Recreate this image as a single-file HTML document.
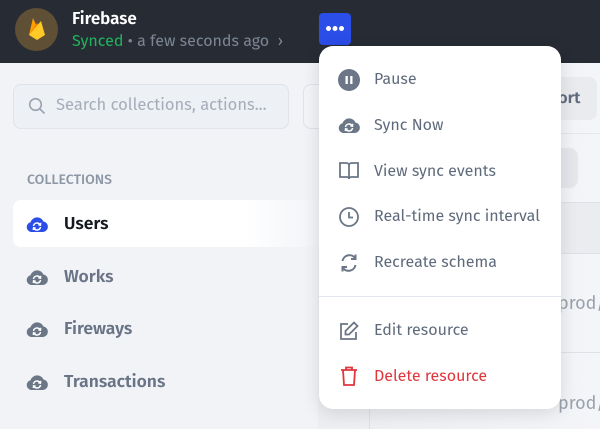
<!DOCTYPE html>
<html><head><meta charset="utf-8"><style>
*{margin:0;padding:0;box-sizing:border-box}
body{width:600px;height:429px;overflow:hidden;position:relative;background:#f1f3f7;font-family:"Fira Sans","Liberation Sans",sans-serif}
.abs{position:absolute}
.hdr{left:0;top:0;width:600px;height:63px;background:#272c34}
.main{left:318px;top:63px;width:282px;height:366px;background:linear-gradient(90deg,#eceef2,#f4f5f8)}
.menu{left:319px;top:46px;width:242px;height:363px;background:#fff;border-radius:14px;box-shadow:0 4px 18px rgba(0,0,0,.12)}
.mi{position:absolute;left:55px;font-size:16px;color:#5f6b7c;white-space:nowrap}
.ic{position:absolute;left:19px}
.side{font-size:17.5px;color:#697486;font-weight:600;position:absolute;left:64px}
</style></head><body>
<div class="abs hdr"></div>
<div class="abs" style="left:15px;top:8px;width:43px;height:43px;border-radius:50%;background:#5e4f35"></div>
<svg class="abs" style="left:26px;top:15px" width="22" height="28" viewBox="0 0 22 28"><path d="M3 20 L7 3 L11 12 Z" fill="#ffa000"/><path d="M3 20 L11 8 L15 14 Z" fill="#f57c00"/><path d="M3 20 L15 6 L19 20 L11 25 Z" fill="#ffca28"/></svg>
<div class="abs" style="left:72px;top:8px;color:#fff;font-size:17px;font-weight:600">Firebase</div>
<div class="abs" style="left:72px;top:32px;font-size:16px;color:#7b8594;white-space:nowrap"><span style="color:#22b35e">Synced</span> • a few seconds ago&nbsp; ›</div>
<div class="abs" style="left:319px;top:13px;width:32px;height:32px;background:#2b4de8;border-radius:4px"></div>
<div class="abs" style="left:326px;top:26px;width:5px;height:5px;border-radius:50%;background:#fff;box-shadow:6.5px 0 #fff,13px 0 #fff"></div>

<div class="abs" style="left:13px;top:84px;width:276px;height:45px;border:1px solid #dfe3ea;border-radius:8px;background:#edf0f5"></div>
<svg class="abs" style="left:28px;top:97px" width="18" height="18" viewBox="0 0 18 18" fill="none" stroke="#9aa3b0" stroke-width="1.6"><circle cx="7.5" cy="7.5" r="5.8"/><path d="M12 12l4.5 4.5"/></svg>
<div class="abs" style="left:56px;top:96px;font-size:16.5px;color:#a6adb9;white-space:nowrap">Search collections, actions...</div>

<div class="abs main"></div>
<div class="abs" style="left:303px;top:84px;width:40px;height:45px;border:1px solid #dfe3ea;border-radius:8px;background:#f3f4f7"></div>
<div class="abs" style="left:540px;top:77px;width:57px;height:43px;border-radius:8px;background:#e9ebef"></div>
<div class="abs" style="left:558px;top:89px;font-size:16.5px;font-weight:600;color:#5f6b7c">ort</div>
<div class="abs" style="left:360px;top:133px;width:240px;height:1px;background:#e3e6eb"></div>
<div class="abs" style="left:540px;top:148px;width:38px;height:40px;border-radius:8px;background:#e5e7ec"></div>
<div class="abs" style="left:370px;top:202px;width:230px;height:52px;background:#eaecf0;border-top:1px solid #dee2e8;border-bottom:1px solid #dee2e8"></div>
<div class="abs" style="left:370px;top:352px;width:230px;height:1px;background:#dee2e8"></div>
<div class="abs" style="left:369px;top:254px;width:1px;height:175px;background:#dde1e7"></div>
<div class="abs" style="left:558px;top:292px;font-size:18px;color:#9aa2ad">prod/</div>
<div class="abs" style="left:558px;top:392px;font-size:18px;color:#9aa2ad">prod/</div>

<div class="abs" style="left:27px;top:171px;font-size:14px;color:#8c96a5;font-weight:500">COLLECTIONS</div>
<div class="abs" style="left:13px;top:200px;width:310px;height:47px;border-radius:8px;background:linear-gradient(90deg,#fff 75%,#f1f3f7)"></div>
<svg width="0" height="0" style="position:absolute"><defs><symbol id="cl" viewBox="0 0 22 16"><path d="M5 16 A5 5 0 0 1 4.5 6.2 A7 7 0 0 1 17.5 5.5 A5.3 5.3 0 0 1 17 16 Z" fill="currentColor"/><path d="M7.5 10 A3.6 3.6 0 0 1 14 8.5 M14.5 11 A3.6 3.6 0 0 1 8 12.5" stroke="#fff" stroke-width="1.5" fill="none"/><path d="M14.8 6.8 L14.5 9.3 L12.2 8.7 M7.2 14 L7.5 11.7 L9.8 12.3" stroke="#fff" stroke-width="1.3" fill="none"/></symbol></defs></svg>
<svg class="abs" style="left:26px;top:216px;color:#2b4de8" width="22" height="16"><use href="#cl"/></svg>
<div class="side" style="top:213px;color:#15191f">Users</div>
<svg class="abs" style="left:26px;top:269px;color:#6b7686" width="22" height="16"><use href="#cl"/></svg>
<div class="side" style="top:266px">Works</div>
<svg class="abs" style="left:26px;top:321px;color:#6b7686" width="22" height="16"><use href="#cl"/></svg>
<div class="side" style="top:318px">Fireways</div>
<svg class="abs" style="left:26px;top:374px;color:#6b7686" width="22" height="16"><use href="#cl"/></svg>
<div class="side" style="top:371px">Transactions</div>

<div class="abs menu">
<svg class="ic" style="top:23px" width="22" height="22" viewBox="0 0 22 22"><circle cx="11" cy="11" r="11" fill="#6b7686"/><rect x="7.5" y="7" width="2.3" height="8" fill="#fff"/><rect x="12.2" y="7" width="2.3" height="8" fill="#fff"/></svg>
<div class="mi" style="top:24px">Pause</div>
<svg class="ic" style="top:71px;color:#6b7686" width="22" height="16"><use href="#cl"/></svg>
<div class="mi" style="top:70px">Sync Now</div>
<svg class="ic" style="top:115px" width="22" height="20" viewBox="0 0 22 20" fill="none" stroke="#6b7686" stroke-width="1.8"><path d="M2 2h6.5a2.5 2.5 0 0 1 2.5 2.5V18a2 2 0 0 0-2-2H2zM20 2h-6.5A2.5 2.5 0 0 0 11 4.5V18a2 2 0 0 1 2-2h7z"/></svg>
<div class="mi" style="top:116px">View sync events</div>
<svg class="ic" style="top:160px" width="22" height="22" viewBox="0 0 22 22" fill="none" stroke="#6b7686" stroke-width="1.8"><circle cx="11" cy="11" r="9"/><path d="M11 6v5.5h4"/></svg>
<div class="mi" style="top:161px">Real-time sync interval</div>
<svg class="ic" style="top:206px" width="22" height="22" viewBox="0 0 22 22" fill="none" stroke="#6b7686" stroke-width="2"><path d="M4.5 9a7 7 0 0 1 12.5-3M17.5 13a7 7 0 0 1-12.5 3"/><path d="M17.5 2.5V7h-4.5M4.5 19.5V15h4.5"/></svg>
<div class="mi" style="top:207px">Recreate schema</div>
<div style="position:absolute;left:0;top:250px;width:242px;height:1px;background:#e2e7ef"></div>
<svg class="ic" style="top:274px" width="22" height="22" viewBox="0 0 22 22" fill="none" stroke="#6b7686" stroke-width="1.8"><path d="M10 4H3v15h15v-7"/><path d="M16 2.5l3.5 3.5L11 14.5H7.5V11z"/></svg>
<div class="mi" style="top:275px">Edit resource</div>
<svg class="ic" style="top:319px" width="22" height="22" viewBox="0 0 22 22" fill="none" stroke="#e0363c" stroke-width="1.8"><path d="M3 5h16M8 5V2.5h6V5M5 5l1 15h10l1-15"/></svg>
<div class="mi" style="top:321px;color:#e0363c">Delete resource</div>
</div>
</body></html>
